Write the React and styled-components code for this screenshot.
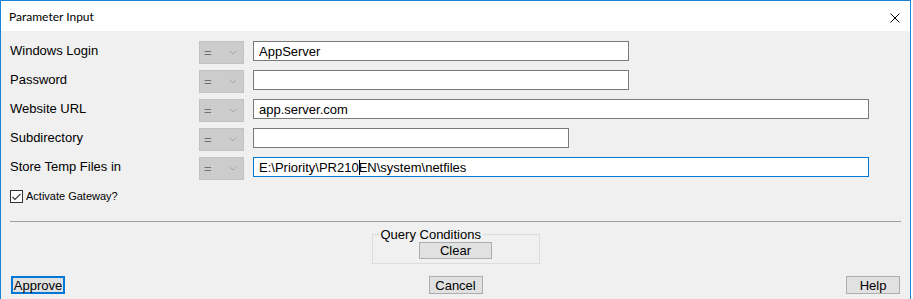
import React from 'react';
import styled, { createGlobalStyle } from 'styled-components';

const GlobalStyle = createGlobalStyle`
  body {
    margin: 0;
    background: #ffffff;
    font-family: "Liberation Sans", Arial, sans-serif;
  }
`;

const Window = styled.div`
  width: 911px;
  height: 299px;
  box-sizing: border-box;
  border: 1px solid #1883d7;
  border-bottom: none;
  background: #f0f0f0;
  display: flex;
  flex-direction: column;
`;

const TitleBar = styled.div`
  height: 30px;
  background: #ffffff;
  display: flex;
  align-items: center;
  justify-content: space-between;
  padding: 0 10px 0 8px;
`;

const Title = styled.span`
  font-family: Lato, "Noto Sans", sans-serif;
  font-size: 12px;
  color: #000;
`;

const Close = styled.button`
  border: 0;
  padding: 0;
  background: none;
  width: 10px;
  height: 10px;
  display: block;
  margin-top: -1px;
`;

const Content = styled.div`
  flex: 1;
  padding: 10px 9px 0 9px;
  display: flex;
  flex-direction: column;
`;

const Fields = styled.div`
  display: flex;
  flex-direction: column;
  gap: 6px;
`;

const Row = styled.div`
  display: flex;
  align-items: flex-start;
  height: 23px;
`;

const Label = styled.div`
  width: 189px;
  font-size: 13px;
  line-height: 15px;
  padding-top: 2px;
  color: #000;
`;

const OpSelect = styled.div`
  width: 45px;
  height: 23px;
  box-sizing: border-box;
  background: #cccccc;
  border: 1px solid #c2c2c2;
  display: flex;
  align-items: center;
  justify-content: space-between;
  padding: 0 6px 0 4px;
  color: #707070;
  font-size: 13px;
`;

const Field = styled.div`
  margin-left: 9px;
  width: ${p => p.$width}px;
  height: 20px;
  box-sizing: border-box;
  background: #ffffff;
  border: 1px solid ${p => (p.$focused ? '#0078d7' : '#7a7a7a')};
  padding: 0 5px;
  display: flex;
  align-items: center;
  font-size: 13px;
  line-height: 15px;
  white-space: pre;
  color: #000;
`;

const Caret = styled.span`
  display: inline-block;
  width: 1px;
  height: 15px;
  background: #000;
  margin-right: -1px;
`;

const CheckRow = styled.label`
  margin-top: 10px;
  height: 13px;
  display: flex;
  align-items: center;
  gap: 3px;
  font-size: 11px;
  line-height: 13px;
  color: #000;
`;

const Box = styled.span`
  width: 13px;
  height: 13px;
  box-sizing: border-box;
  border: 1px solid #333333;
  background: #ffffff;
  display: flex;
  align-items: center;
  justify-content: center;
`;

const Separator = styled.hr`
  border: 0;
  border-top: 1px solid #a0a0a0;
  margin: 18px 0 0 0;
  height: 0;
`;

const Group = styled.fieldset`
  align-self: center;
  width: 168px;
  box-sizing: border-box;
  margin: 5px 0 0 0;
  padding: 0 0 4px 0;
  border: 1px solid #dcdcdc;
  display: flex;
  justify-content: center;
`;

const Legend = styled.legend`
  margin-left: 6px;
  padding: 0 2px;
  font-size: 13px;
  line-height: 15px;
  color: #000;
`;

const Button = styled.button`
  width: ${p => p.$width}px;
  height: ${p => p.$height || 18}px;
  box-sizing: border-box;
  background: #e1e1e1;
  border: ${p => (p.$default ? '2px solid #0078d7' : '1px solid #adadad')};
  padding: 0;
  font-family: "Liberation Sans", Arial, sans-serif;
  font-size: 13px;
  line-height: 15px;
  color: #000;
`;

const Actions = styled.div`
  margin-top: 12px;
  padding: 0 1px;
  display: flex;
  justify-content: space-between;
`;

const Chevron = () => (
  <svg width="8" height="5" viewBox="0 0 8 5">
    <polyline points="0.5,0.5 4,4 7.5,0.5" fill="none" stroke="#a6a6a6" strokeWidth="1" />
  </svg>
);

const fields = [
  { label: 'Windows Login', value: 'AppServer', width: 376 },
  { label: 'Password', value: '', width: 376 },
  { label: 'Website URL', value: 'app.server.com', width: 616 },
  { label: 'Subdirectory', value: '', width: 316 },
  { label: 'Store Temp Files in', value: 'E:\\Priority\\PR210EN\\system\\netfiles', width: 616, focused: true, caret: 17 },
];

export default function App() {
  return (
    <>
      <GlobalStyle />
      <Window>
        <TitleBar>
          <Title>Parameter Input</Title>
          <Close aria-label="Close">
            <svg width="10" height="10" viewBox="0 0 10 10">
              <path d="M0.5 0.5 L9.5 9.5 M9.5 0.5 L0.5 9.5" stroke="#000" strokeWidth="1" />
            </svg>
          </Close>
        </TitleBar>
        <Content>
          <Fields>
            {fields.map(f => (
              <Row key={f.label}>
                <Label>{f.label}</Label>
                <OpSelect>
                  <span>=</span>
                  <Chevron />
                </OpSelect>
                <Field $width={f.width} $focused={f.focused}>
                  {f.caret ? (
                    <>
                      {f.value.slice(0, f.caret)}
                      <Caret />
                      {f.value.slice(f.caret)}
                    </>
                  ) : (
                    f.value
                  )}
                </Field>
              </Row>
            ))}
          </Fields>
          <CheckRow>
            <Box>
              <svg width="9" height="8" viewBox="0 0 9 8">
                <polyline points="0.5,4 3,6.5 8.5,0.8" fill="none" stroke="#333" strokeWidth="1.1" />
              </svg>
            </Box>
            Activate Gateway?
          </CheckRow>
          <Separator />
          <Group>
            <Legend>Query Conditions</Legend>
            <Button $width={73} $height={17}>Clear</Button>
          </Group>
          <Actions>
            <Button $width={54} $default>Approve</Button>
            <Button $width={54}>Cancel</Button>
            <Button $width={54}>Help</Button>
          </Actions>
        </Content>
      </Window>
    </>
  );
}
